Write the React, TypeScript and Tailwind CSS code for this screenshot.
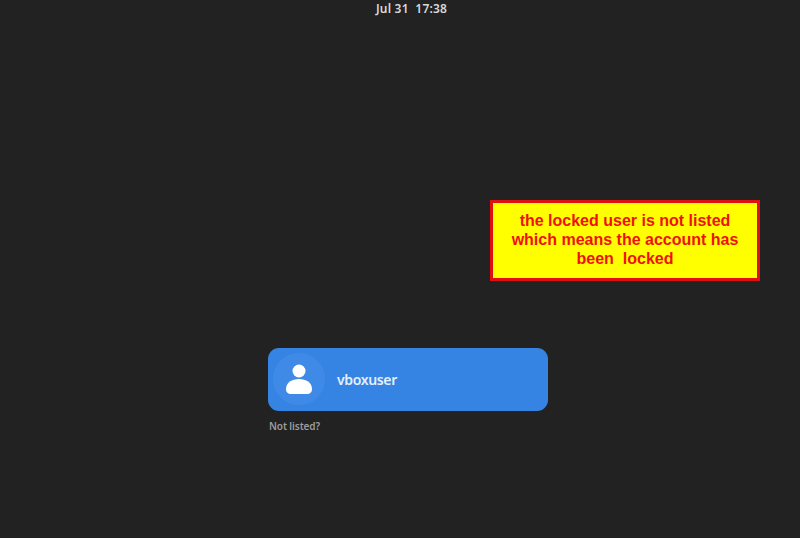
const FONT = "font-['Noto_Sans','Open_Sans',sans-serif]";

const UserIcon = () => (
  <svg width="28" height="32" viewBox="0 0 28 32" fill="#fff" aria-hidden="true">
    <circle cx="14" cy="8" r="6.5" />
    <path d="M1 26 C1 19.5 7 16 14 16 C21 16 27 19.5 27 26 C27 29.5 25 31 22 31 L6 31 C3 31 1 29.5 1 26 Z" />
  </svg>
);

const App = () => {
  return (
    <div className={`relative flex h-[538px] w-[800px] flex-col overflow-hidden bg-[#222222] ${FONT}`}>
      <header className="flex h-[17px] items-center justify-center pl-[23px] text-[12px] font-semibold tracking-[0.2px] text-[#d8d8d8]">
        <span className="whitespace-pre">Jul 31  17:38</span>
      </header>

      <main className="ml-[268px] mt-[331px] w-[280px]">
        <div className="flex h-[63px] items-center gap-[12px] rounded-[11px] bg-[#3584e4] pb-[1px] pl-[5px]">
          <div className="flex h-[52px] w-[52px] items-center justify-center rounded-full bg-[#3f8ae6]">
            <UserIcon />
          </div>
          <span className="text-[14px] font-semibold tracking-[-0.35px] text-[#e4effb]">vboxuser</span>
        </div>
        <p className="ml-[1px] mt-[8px] text-[10px] font-semibold leading-[15px] tracking-[-0.1px] text-[#9c9c9c]">Not listed?</p>
      </main>

      <div className="absolute left-[490px] top-[200px] flex h-[81px] w-[270px] items-center justify-center border-[3px] border-[#e01010] bg-[#ffff00] pb-[2px] font-['Liberation_Sans',sans-serif] text-[16px] font-bold leading-[19px] text-[#f01010]">
        <p className="whitespace-pre text-center">
          the locked user is not listed
          <br />
          which means the account has
          <br />
          been  locked
        </p>
      </div>
    </div>
  );
};

export default App;
